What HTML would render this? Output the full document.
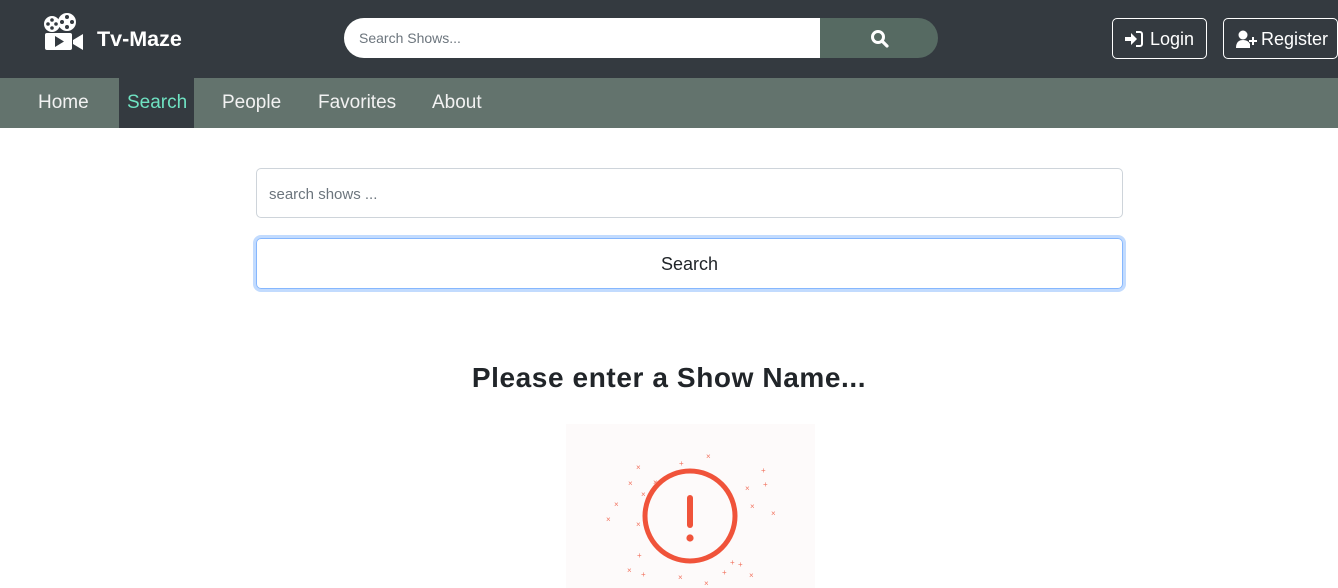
<!DOCTYPE html>
<html><head><meta charset="utf-8"><style>
*{box-sizing:border-box;margin:0;padding:0}
body{width:1338px;height:588px;overflow:hidden;background:#fff;font-family:"Liberation Sans",sans-serif;position:relative}
.hdr{position:absolute;left:0;top:0;width:1338px;height:78px;background:#343a40}
.brand{position:absolute;left:97px;top:27px;color:#fff;font-weight:bold;font-size:21.5px}
.sb{position:absolute;left:344px;top:18px;width:594px;height:40px;border-radius:20px;overflow:hidden;background:#566a62}
.sb .in{position:absolute;left:0;top:0;width:476px;height:40px;background:#fff;color:#6c757d;font-size:14px;padding:12px 0 0 15px}
.btn{position:absolute;top:18px;height:41px;border:1px solid #fff;border-radius:5px;color:#fff;font-size:18px;padding-top:10px}
.nav{position:absolute;left:0;top:78px;width:1338px;height:50px;background:#63736d}
.nav span{position:absolute;top:14px;color:#f2f2f2;font-size:19px}
.act{position:absolute;left:119px;top:0;width:75px;height:50px;background:#343a40}
.f{position:absolute;left:256px;width:867px;border-radius:5px}
h2{position:absolute;left:0;width:1338px;top:362px;text-align:center;font-size:28px;font-weight:bold;color:#212529;letter-spacing:0.6px}
</style></head><body>
<div class="hdr">
<svg style="position:absolute;left:43px;top:13px" width="42" height="38" viewBox="0 0 42 38" fill="#fff">
<circle cx="9" cy="11" r="8"/><circle cx="24" cy="9" r="9"/>
<g fill="#343a40"><circle cx="9" cy="7" r="1.8"/><circle cx="9" cy="15" r="1.8"/><circle cx="5" cy="11" r="1.8"/><circle cx="13" cy="11" r="1.8"/>
<circle cx="24" cy="4" r="2"/><circle cx="24" cy="14" r="2"/><circle cx="19" cy="9" r="2"/><circle cx="29" cy="9" r="2"/></g>
<rect x="2" y="20" width="27" height="17" rx="2"/><path d="M30 27 L40 21 V37 L30 31Z"/>
<path d="M12 23 V34 L21 28.5Z" fill="#343a40"/></svg>
<div class="brand">Tv-Maze</div>
<div class="sb"><div class="in">Search Shows...</div>
<svg style="position:absolute;left:526px;top:11px" width="19" height="19" viewBox="0 0 19 19"><circle cx="8" cy="8" r="5.5" fill="none" stroke="#fff" stroke-width="3"/><path d="M12 12 L17 17" stroke="#fff" stroke-width="3.2" stroke-linecap="round"/></svg></div>
<div class="btn" style="left:1112px;width:95px;padding-left:37px">Login
<svg style="position:absolute;left:12px;top:12px" width="18" height="16" viewBox="0 0 18 16" fill="#fff"><path d="M0 6h6V2l6 6-6 6v-4H0z"/><path d="M11 1h4a2 2 0 0 1 2 2v10a2 2 0 0 1-2 2h-4" fill="none" stroke="#fff" stroke-width="2"/></svg></div>
<div class="btn" style="left:1223px;width:115px;padding-left:37px">Register
<svg style="position:absolute;left:12px;top:11px" width="22" height="18" viewBox="0 0 22 18" fill="#fff"><circle cx="7" cy="5" r="4.5"/><path d="M0 18c0-6 3-8 7-8s6 2 7 4v4z"/><path d="M13 10h3V7h2v3h3v2h-3v3h-2v-3h-3z"/></svg></div>
</div>
<div class="nav"><div class="act"></div>
<span style="left:38px">Home</span><span style="left:127px;color:#6fe2c2">Search</span><span style="left:222px">People</span><span style="left:318px">Favorites</span><span style="left:432px">About</span></div>
<div class="f" style="top:168px;height:50px;border:1px solid #ced4da;color:#6c757d;font-size:15px;padding:17px 0 0 12px">search shows ...</div>
<div class="f" style="top:238px;height:51px;border:1px solid #86b7fe;box-shadow:0 0 0 3px #c2dbfe;text-align:center;font-size:18px;color:#212529;padding-top:15px">Search</div>
<h2>Please enter a Show Name...</h2>
<div style="position:absolute;left:566px;top:424px;width:249px;height:164px;background:#fdfafa"></div>
<svg style="position:absolute;left:566px;top:424px" width="249" height="164" viewBox="0 0 249 164">
<circle cx="124" cy="92" r="45" fill="none" stroke="#f0533a" stroke-width="5"/>
<line x1="124" y1="74" x2="124" y2="101" stroke="#f0533a" stroke-width="6" stroke-linecap="round"/>
<circle cx="124" cy="114" r="3.6" fill="#f0533a"/>
<g fill="#f0533a" font-size="8" font-family="Liberation Sans" opacity="0.8">
<text x="140" y="35">×</text><text x="113" y="42">+</text><text x="70" y="46">×</text><text x="62" y="62">×</text><text x="75" y="73">×</text><text x="48" y="83">×</text><text x="40" y="98">×</text><text x="70" y="103">×</text><text x="71" y="134">+</text><text x="61" y="149">×</text><text x="75" y="153">+</text><text x="112" y="156">×</text><text x="138" y="162">×</text><text x="156" y="151">+</text><text x="172" y="143">+</text><text x="183" y="154">×</text><text x="179" y="67">×</text><text x="184" y="85">×</text><text x="195" y="49">+</text><text x="197" y="63">+</text><text x="205" y="92">×</text><text x="87" y="61">×</text><text x="164" y="141">+</text></g>
</svg>
</body></html>
